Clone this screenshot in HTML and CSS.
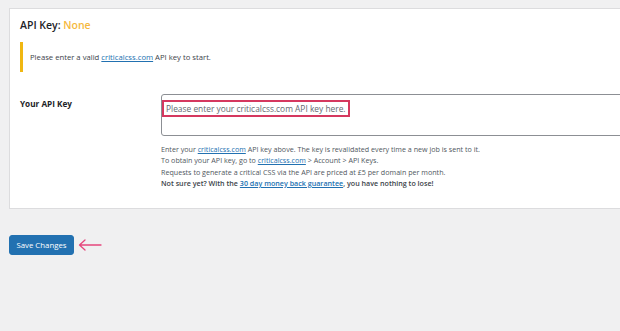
FILE: index.html
```html
<!DOCTYPE html>
<html>
<head>
<meta charset="utf-8">
<link rel="stylesheet" href="styles.css">
</head>
<body>
<div class="card">
  <h2 class="title">API Key: <span class="none">None</span></h2>
  <div class="notice"><p>Please enter a valid <a href="#">criticalcss.com</a> API key to start.</p></div>
  <div class="row">
    <div class="label">Your API Key</div>
    <div class="field">
      <div class="textarea"><span class="ph">Please enter your criticalcss.com API key here.</span></div>
      <div class="desc">
        <p>Enter your <a href="#">criticalcss.com</a> API key above. The key is revalidated every time a new job is sent to it.</p>
        <p>To obtain your API key, go to <a href="#">criticalcss.com</a> &gt; Account &gt; API Keys.</p>
        <p>Requests to generate a critical CSS via the API are priced at £5 per domain per month.</p>
        <p class="strong">Not sure yet? With the <a href="#">30 day money back guarantee</a>, you have nothing to lose!</p>
      </div>
    </div>
  </div>
</div>
<div class="actions">
  <button class="btn">Save Changes</button>
  <svg class="arrow" width="24" height="12" viewBox="0 0 24 12"><path d="M23 6H2M7 1L1.5 6L7 11" fill="none" stroke="#e5467c" stroke-width="1.3" stroke-linecap="round" stroke-linejoin="round"/></svg>
</div>
</body>
</html>
```
FILE: styles.css
```css
html, body { margin: 0; padding: 0; }
body {
  background: #f0f0f1;
  font-family: "Open Sans", "Noto Sans", sans-serif;
  color: #3c434a;
  padding: 8px 0 0 9px;
  overflow: hidden;
}
.card {
  background: #fff;
  border: 1px solid #dcdcde;
  border-right: none;
  margin-right: -30px;
  padding: 9px 0 19px 10px;
}
.title {
  margin: 0;
  font-size: 10.5px;
  line-height: 15px;
  font-weight: 600;
  color: #1d2327;
}
.none { color: #f5b93f; }
.notice {
  margin-top: 9px;
  border-left: 3px solid #f0b712;
  height: 30px;
  display: flex;
  align-items: center;
  padding-left: 7px;
}
.notice p { margin: 0; font-size: 7.7px; color: #3c434a; }
a { color: #2271b1; }
.row {
  display: flex;
  margin-top: 22px;
}
.label {
  width: 141px;
  font-size: 8.2px;
  font-weight: 700;
  color: #1d2327;
  padding-top: 4px;
}
.field { flex: 1; }
.textarea {
  height: 40px;
  border: 1px solid #8c8f94;
  border-radius: 3px;
  padding: 0;
}
.ph {
  display: inline-block;
  border: 2px solid #d5385f;
  padding: 1px 2px;
  font-size: 8.4px;
  line-height: 11px;
  color: #646970;
}
.desc { margin-top: 8px; }
.desc p { margin: 0; font-size: 7.15px; line-height: 11.3px; color: #50575e; }
.desc p.strong { font-weight: 600; color: #3c434a; }
.actions {
  display: flex;
  align-items: center;
  margin-top: 26px;
}
.btn {
  background: #2271b1;
  color: #fff;
  border: 1px solid #2271b1;
  border-radius: 3px;
  font-family: inherit;
  font-size: 7.8px;
  height: 20px;
  width: 65px;
  padding: 0;
}
.arrow { margin-left: 4px; }
```
